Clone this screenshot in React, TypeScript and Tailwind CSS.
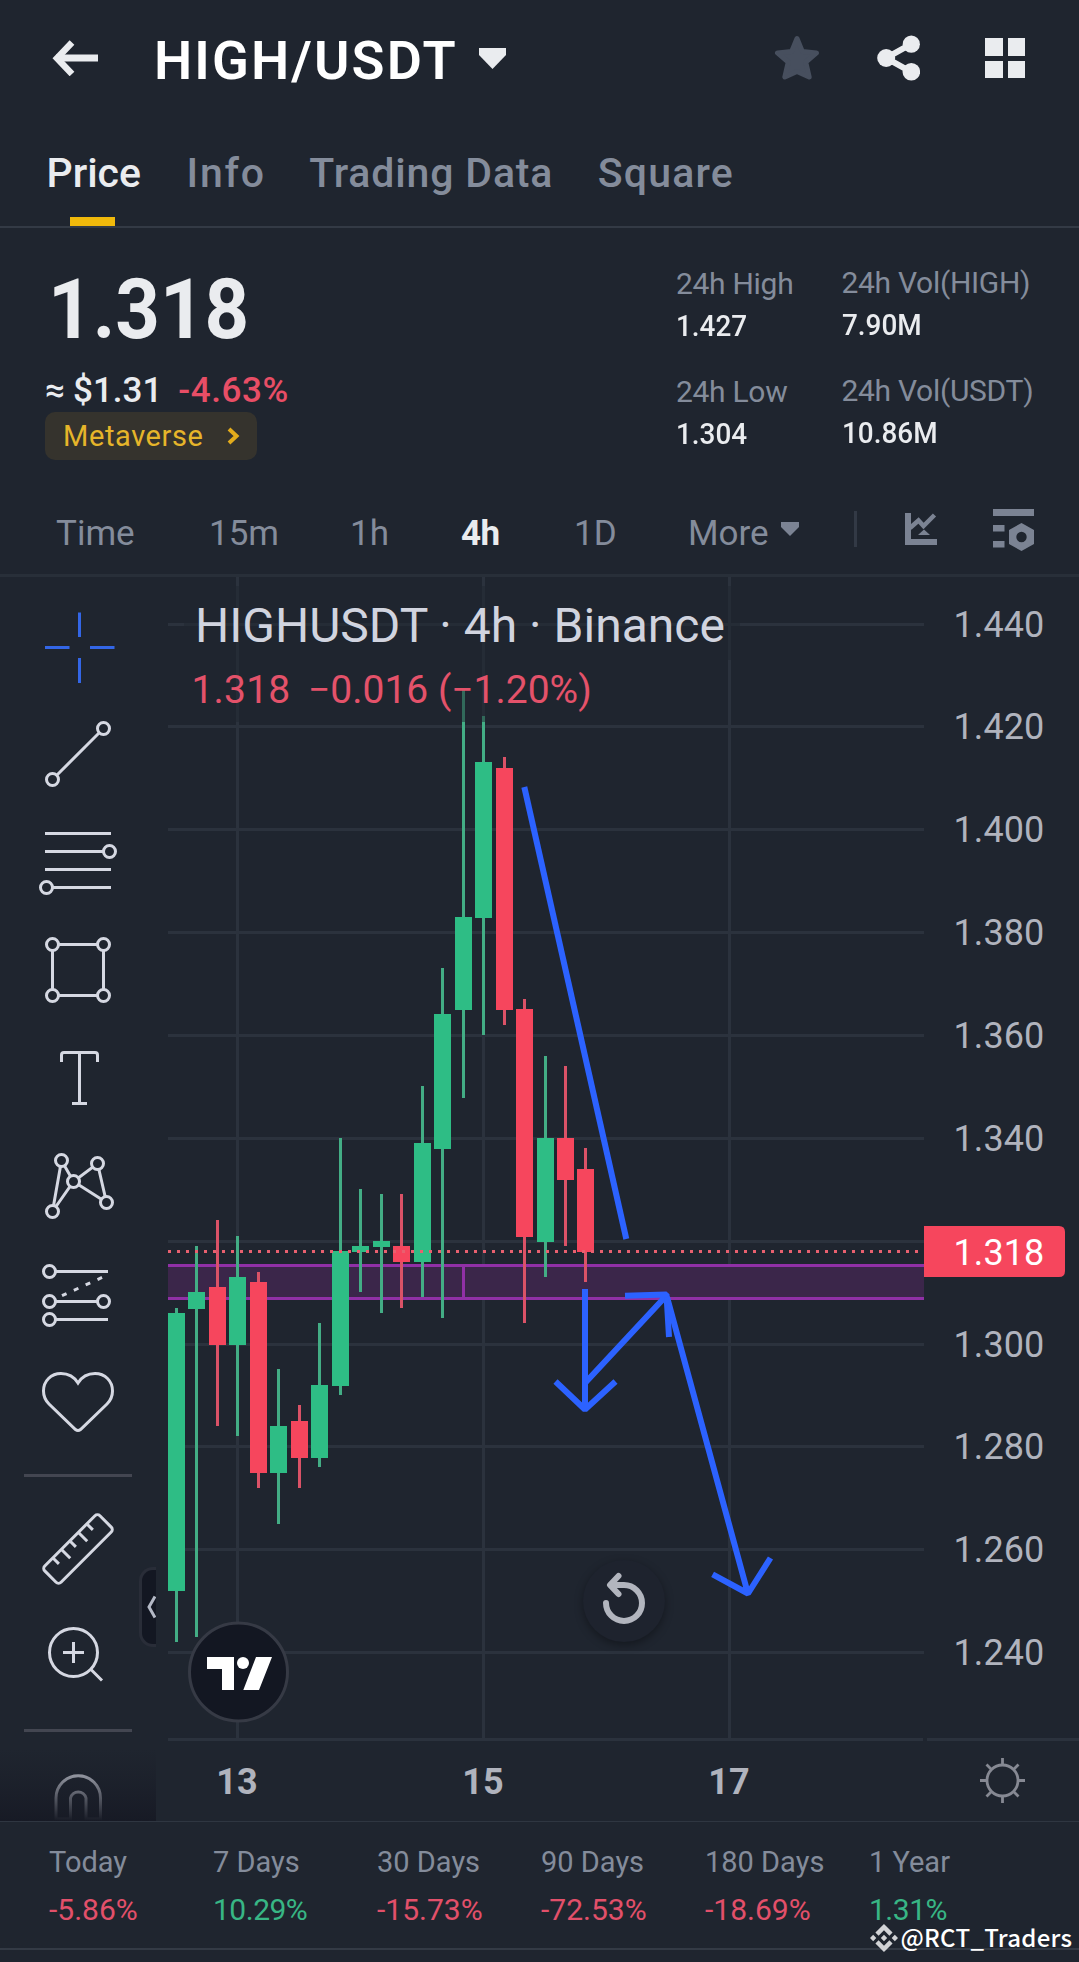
import { SiBinance } from 'react-icons/si'

const GREEN = '#2ebd85'
const RED = '#f6465d'

// [x, high, bodyTop, bodyBottom, low, up]
const candles: [number, number, number, number, number, boolean][] = [
  [176.5, 1308, 1313, 1591, 1642, true],
  [196.5, 1246, 1292, 1309, 1637, true],
  [217.5, 1220, 1287, 1345, 1426, false],
  [237.5, 1236, 1277, 1345, 1436, true],
  [258.5, 1272, 1282, 1473, 1488, false],
  [278.5, 1369, 1426, 1473, 1524, true],
  [299.5, 1405, 1421, 1458, 1488, false],
  [319.5, 1323, 1385, 1458, 1467, true],
  [340.5, 1138, 1251, 1386, 1395, true],
  [360.5, 1189, 1246, 1252, 1292, true],
  [381.5, 1194, 1241, 1247, 1313, true],
  [401.5, 1194, 1246, 1262, 1308, false],
  [422.5, 1086, 1143, 1262, 1297, true],
  [442.5, 968, 1014, 1149, 1318, true],
  [463.5, 690, 917, 1010, 1098, true],
  [483.5, 716, 762, 918, 1035, true],
  [504.5, 757, 768, 1010, 1025, false],
  [524.5, 999, 1009, 1237, 1323, false],
  [545.5, 1056, 1138, 1242, 1277, true],
  [565.5, 1066, 1138, 1180, 1246, false],
  [585.5, 1148, 1169, 1252, 1282, false],
]

const levels = [
  { y: 624.5, label: '1.440' },
  { y: 726.5, label: '1.420' },
  { y: 829.5, label: '1.400' },
  { y: 932.5, label: '1.380' },
  { y: 1035.5, label: '1.360' },
  { y: 1138.5, label: '1.340' },
  { y: 1241.5, label: '' },
  { y: 1344.5, label: '1.300' },
  { y: 1446.5, label: '1.280' },
  { y: 1549.5, label: '1.260' },
  { y: 1652.5, label: '1.240' },
]

const days = [
  { x: 237.5, label: '13' },
  { x: 483.5, label: '15' },
  { x: 729.5, label: '17' },
]

const periods = [
  { label: 'Today', value: '-5.86%', up: false },
  { label: '7 Days', value: '10.29%', up: true },
  { label: '30 Days', value: '-15.73%', up: false },
  { label: '90 Days', value: '-72.53%', up: false },
  { label: '180 Days', value: '-18.69%', up: false },
  { label: '1 Year', value: '1.31%', up: true },
]

function Header() {
  return (
    <header className="flex h-[116px] items-center">
      <svg className="ml-[52px] h-[36px] w-[46px]" viewBox="52 40 46 36" fill="none" stroke="#eaecef">
        <path d="M56 58H98" strokeWidth="7" />
        <path d="M72 42.5L57 58.2L72 74" strokeWidth="6.5" />
      </svg>
      <h1 className="mt-[6px] ml-[56px] text-[54px] leading-[60px] font-semibold tracking-[2.13px] text-white">HIGH/USDT</h1>
      <svg className="ml-[21px] h-[21px] w-[27px]" viewBox="0 0 27 21" fill="#eaecef">
        <path d="M0 0H27V7L13.5 21L0 7Z" />
      </svg>
      <svg className="ml-auto h-[46px] w-[46px]" viewBox="0 0 46 46" fill="#474f5e" stroke="#474f5e" strokeWidth="5" strokeLinejoin="round">
        <path d="M23 3.5L28.4 16.6L42.5 17.9L31.8 27.2L35.2 42L23 36.4L10.8 42L14.2 27.2L3.5 17.9L17.6 16.6Z" />
      </svg>
      <svg className="ml-[57px] h-[46px] w-[43px]" viewBox="877 35 43 46" fill="#eaecef" stroke="#eaecef">
        <path d="M911 44.2L886 58L911 71.8" fill="none" strokeWidth="6" />
        <circle cx="911.3" cy="44.2" r="8.6" stroke="none" />
        <circle cx="886.2" cy="58" r="9" stroke="none" />
        <circle cx="911.3" cy="71.8" r="8.8" stroke="none" />
      </svg>
      <div className="mr-[54px] ml-[65px] grid grid-cols-2 gap-[5px]">
        <i className="h-[17.5px] w-[17.5px] bg-[#eaecef]" />
        <i className="h-[17.5px] w-[17.5px] bg-[#eaecef]" />
        <i className="h-[17.5px] w-[17.5px] bg-[#eaecef]" />
        <i className="h-[17.5px] w-[17.5px] bg-[#eaecef]" />
      </div>
    </header>
  )
}

function Tabs() {
  return (
    <nav className="flex h-[112px] gap-[44.5px] border-b-2 border-[#333a45] pt-[33px] pl-[46.5px] text-[41px] leading-[48px] font-medium text-[#848c9b]">
      <div className="flex flex-col items-center text-[#eaecef]">
        Price
        <i className="mt-[20px] mr-[2px] h-[9px] w-[45px] bg-[#f0b90b]" />
      </div>
      <div className="ml-[1px] tracking-[1.8px]">Info</div>
      <div className="ml-[-1px] tracking-[0.84px]">Trading Data</div>
      <div className="tracking-[1.19px]">Square</div>
    </nav>
  )
}

function Stat({ label, value }: { label: string; value: string }) {
  return (
    <div className="mb-[24px]">
      <div className="tracking-[-0.3px] text-[#848c9b]">{label}</div>
      <div className="origin-left scale-x-[0.93] font-medium text-[#eaecef]">{value}</div>
    </div>
  )
}

function Summary() {
  return (
    <section className="flex h-[262px]">
      <div className="w-[631px] pt-[40px] pl-[45px]">
        <div className="ml-[3px] origin-left scale-x-[0.927] text-[84px] leading-[84px] font-bold text-[#eaecef]">1.318</div>
        <div className="mt-[19px] flex text-[35px] leading-[40px] font-medium text-[#eaecef]">
          <span>≈</span>
          <span className="ml-[8px]">$1.31</span>
          <span className="ml-[16px] tracking-[0.6px] text-[#e84e66]">-4.63%</span>
        </div>
        <div className="mt-[1px] flex h-[48px] w-[212px] items-center rounded-[10px] bg-[#35332d] pl-[18px] text-[29px] tracking-[0.6px] text-[#e6b52a]">
          <span className="pt-[2px]">Metaverse</span>
          <svg className="ml-[23px] h-[18px] w-[13px]" viewBox="0 0 13 18" fill="none" stroke="#e3ac1c" strokeWidth="4">
            <path d="M2 2L9.5 9L2 16" />
          </svg>
        </div>
      </div>
      <div className="ml-[45px] flex text-[30px] leading-[42px] whitespace-nowrap">
        <div className="w-[165.5px] pt-[35px]">
          <Stat label="24h High" value="1.427" />
          <Stat label="24h Low" value="1.304" />
        </div>
        <div className="pt-[34px]">
          <Stat label="24h Vol(HIGH)" value="7.90M" />
          <Stat label="24h Vol(USDT)" value="10.86M" />
        </div>
      </div>
    </section>
  )
}

function Intervals() {
  return (
    <div className="flex h-[84px] items-center pl-[56px] text-[35px] leading-[40px] text-[#848c9b]">
      <span className="w-[153px] pt-[3px]">Time</span>
      <span className="w-[141px] pt-[3px]">15m</span>
      <span className="w-[111px] pt-[3px]">1h</span>
      <span className="w-[113px] pt-[3px] font-bold tracking-[-0.5px] text-[#eaecef]">4h</span>
      <span className="w-[114px] pt-[3px]">1D</span>
      <span className="w-[93px] pt-[3px]">More</span>
      <svg className="mt-[-6px] h-[14px] w-[18px]" viewBox="0 0 18 14" fill="#7b8393">
        <path d="M0 0H18V5L9 14L0 5Z" />
      </svg>
      <i className="mt-[-6px] ml-[55px] h-[36px] w-[3px] bg-[#323945]" />
      <svg className="mt-[-6px] ml-[48px] h-[32px] w-[32px]" viewBox="0 0 32 32" fill="#7b8393">
        <path d="M0 0H6V26H32V32H0Z" />
        <path d="M5 15L13.5 7.5L18.5 13L29.5 2" fill="none" stroke="#7b8393" strokeWidth="4.5" />
        <path d="M13 22L19 16.5L25 22Z" />
      </svg>
      <svg className="mt-[-4px] ml-[56px] h-[42px] w-[42px]" viewBox="0 0 42 42" fill="#7b8393">
        <path d="M0 0H41V7H0ZM0 16H11.5V22.5H0ZM0 32H11.5V38.5H0Z" />
        <path fillRule="evenodd" d="M28.5 14L41 21V35L28.5 42L16 35V21ZM28.5 22.8A5.2 5.2 0 1 0 28.5 33.2A5.2 5.2 0 1 0 28.5 22.8Z" />
      </svg>
    </div>
  )
}

function Tool({ top, children }: { top: number; children: React.ReactNode }) {
  return (
    <svg className="block h-[108px] w-[156px]" viewBox={`0 ${top} 156 108`} fill="none" stroke="#d5d8e2" strokeWidth="3">
      {children}
    </svg>
  )
}

function Dot({ x, y }: { x: number; y: number }) {
  return <circle cx={x} cy={y} r="6" fill="#1f252f" />
}

function Toolbar() {
  return (
    <aside className="relative w-[156px] shrink-0 pt-[16px]">
      <Tool top={593}>
        <path stroke="#3366e6" d="M79.5 612.5V637M79.5 658V683M45 647.5H69.5M90 647.5H114.5" />
      </Tool>
      <Tool top={701}>
        <path d="M52.5 779.5L103.5 728.5" />
        <Dot x={103.5} y={728.5} />
        <Dot x={52.5} y={779.5} />
      </Tool>
      <Tool top={809}>
        <path d="M45 833.5H111M45 851.5H109M45 869.5H111M46 887.5H111" />
        <Dot x={109.5} y={851.5} />
        <Dot x={46.5} y={887.5} />
      </Tool>
      <Tool top={917}>
        <path d="M52.5 944.5H103.5V995.5H52.5Z" />
        <Dot x={52.5} y={944.5} />
        <Dot x={103.5} y={944.5} />
        <Dot x={52.5} y={995.5} />
        <Dot x={103.5} y={995.5} />
      </Tool>
      <Tool top={1025}>
        <path d="M61.5 1062V1055Q61.5 1052.5 64 1052.5H95Q97.5 1052.5 97.5 1055V1062M79.5 1052.5V1103.5M72 1103.5H87" />
      </Tool>
      <Tool top={1133}>
        <path d="M73.5 1181.5L61.5 1160.5L52.5 1211.5L73.5 1181.5L97.5 1163.5L106.5 1202.5Z" />
        <Dot x={61.5} y={1160.5} />
        <Dot x={97.5} y={1163.5} />
        <Dot x={73.5} y={1181.5} />
        <Dot x={106.5} y={1202.5} />
        <Dot x={52.5} y={1211.5} />
      </Tool>
      <Tool top={1241}>
        <path d="M49.5 1271.5H108M49.5 1301.5H103.5M49.5 1319.5H108" />
        <path d="M62 1295.7L104 1276.6" strokeDasharray="5 8" />
        <Dot x={49.5} y={1271.5} />
        <Dot x={49.5} y={1301.5} />
        <Dot x={103.5} y={1301.5} />
        <Dot x={49.5} y={1319.5} />
      </Tool>
      <Tool top={1349}>
        <path d="M78 1383C74 1376.5 67 1373.5 61 1373.5C51 1373.5 43.5 1381 43.5 1391C43.5 1397 46 1401 49 1404L75.5 1429.5Q78 1431.5 80.5 1429.5L107 1404C110 1401 112.5 1397 112.5 1391C112.5 1381 105 1373.5 95 1373.5C89 1373.5 82 1376.5 78 1383Z" />
      </Tool>
      <div className="flex h-[38px] items-center pb-[2px] pl-[24px]">
        <i className="h-[3px] w-[108px] bg-[#434651]" />
      </div>
      <Tool top={1495}>
        <g transform="translate(78 1549) rotate(-45)">
          <rect x="-39" y="-11.5" width="78" height="23" rx="3.5" />
          <path d="M-24 -11V-3M-12 -11V1M0 -11V-3M12 -11V1M24 -11V-3" />
        </g>
      </Tool>
      <Tool top={1603}>
        <circle cx="73.5" cy="1652.5" r="24" />
        <path d="M63 1652.5H84M73.5 1642V1663M91 1669.5L102 1680.5" />
      </Tool>
      <div className="flex h-[38px] items-center pl-[24px]">
        <i className="h-[3px] w-[108px] bg-[#434651]" />
      </div>
      <svg className="block h-[72px] w-[156px]" viewBox="0 1749 156 72" fill="none" stroke="#d5d8e2" strokeWidth="3">
        <defs>
          <linearGradient id="fade" x1="0" y1="0" x2="0" y2="1">
            <stop offset="0" stopColor="#1a1d28" stopOpacity="0" />
            <stop offset="1" stopColor="#171a25" />
          </linearGradient>
        </defs>
        <path d="M56 1819V1798A22.25 22.25 0 0 1 100.5 1798V1819H86V1798A8 8 0 0 0 70.5 1798V1819Z" />
        <rect x="0" y="1749" width="156" height="72" fill="url(#fade)" stroke="none" />
      </svg>
      {/* collapse handle */}
      <div className="absolute top-[990px] right-0 flex h-[80px] w-[17px] items-center justify-end rounded-l-[14px] border-[3px] border-r-0 border-[#292d38] bg-[#131722]">
        <svg className="h-[24px] w-[9px]" viewBox="0 0 9 24" fill="none" stroke="#b4b9c6" strokeWidth="3">
          <path d="M8 1.5L2 12L8 22.5" />
        </svg>
      </div>
    </aside>
  )
}

function Chart() {
  return (
    <svg className="block h-[1244px] w-[923px]" viewBox="156 577 923 1244">
      <g stroke="#2b323d" strokeWidth="3">
        {levels.map((l) => (
          <path key={l.y} d={`M168 ${l.y}H924`} />
        ))}
        {days.map((d) => (
          <path key={d.x} d={`M${d.x} 577V1739`} />
        ))}
        <path d="M168 1739.5H923M927 1739.5H1079" />
      </g>

      <rect x="168" y="1265.5" width="756" height="33" fill="#3b264a" />
      <path d="M168 1265.5H924M168 1298.5H924M463.5 1265V1299" stroke="#9030a6" strokeWidth="3" fill="none" />

      {candles.map(([x, high, top, bottom, low, up]) => (
        <g key={x}>
          <rect x={x - 1.5} y={high} width="3" height={low - high} fill={up ? '#43ad85' : '#da5267'} />
          <rect x={x - 8.5} y={top} width="17" height={bottom - top} fill={up ? GREEN : RED} />
        </g>
      ))}
      <path d="M168 1251.5H924" stroke="#e8606f" strokeWidth="3" strokeDasharray="3 6" />

      <g stroke="#2c62ff" strokeWidth="6" fill="none" strokeLinejoin="bevel">
        <path d="M524.3 787L626.3 1239" />
        <path d="M585 1289V1409M555.5 1381.5L585 1409.5L615.5 1381.5" />
        <path d="M585 1383L666 1296M625 1295.7L666.5 1294.5L669 1337" />
        <path d="M667 1297L747.5 1592M712.6 1574.3L748 1593.5L770.5 1558" />
      </g>

      {/* legend */}
      <rect x="184" y="586" width="556" height="74" fill="#1f252f" fillOpacity="0.5" />
      <rect x="184" y="660" width="420" height="62" fill="#1f252f" fillOpacity="0.5" />
      <text x="195" y="642" fontSize="48" fill="#d1d4df">HIGHUSDT · 4h · Binance</text>
      <g fontSize="39" fill="#e4526a">
        <text x="191.5" y="703" letterSpacing="0.2">1.318</text>
        <text x="308" y="703">−0.016 (−1.20%)</text>
      </g>

      <g fontSize="36" fill="#b0b3bd">
        {levels.map((l) => (
          <text key={l.y} x="953.5" y={l.y + 12.4} letterSpacing="0.1">{l.label}</text>
        ))}
        {days.map((d) => (
          <text key={d.x} x={d.x - 0.5} y="1794" fontWeight="700" textAnchor="middle">{d.label}</text>
        ))}
      </g>
      <path d="M924 1226H1059Q1065 1226 1065 1232V1271Q1065 1277 1059 1277H924Z" fill={RED} />
      <text x="953.5" y="1264.5" fontSize="36" letterSpacing="0.1" fill="#fff">1.318</text>

      {/* tradingview badge */}
      <circle cx="238.5" cy="1672" r="49" fill="#131722" stroke="#363a45" strokeWidth="3" />
      <path d="M207 1657H234V1690H222V1669H207ZM256 1657H272L259 1690H243.3Z" fill="#fff" />
      <circle cx="243" cy="1663" r="6" fill="#fff" />

      {/* reset view */}
      <circle className="drop-shadow-[0_3px_4px_rgba(0,0,0,0.35)]" cx="624" cy="1601" r="41" fill="#1e232e" />
      <g fill="none" stroke="#b2b5be" strokeWidth="6" strokeLinecap="round" strokeLinejoin="round">
        <path d="M606 1603A18 18 0 1 0 624 1585H611" />
        <path d="M618.5 1576L610 1585L618.5 1594" />
      </g>

      {/* axis settings */}
      <g transform="translate(1002.5 1780.5)" fill="none" stroke="#868993" strokeWidth="2.8">
        <circle r="15.5" />
        <path d="M0 -16V-22.5M0 16V22.5M-16 0H-22.5M16 0H22.5M-11 -11L-16 -16M11 -11L16 -16M-11 11L-16 16M11 11L16 16" />
      </g>
    </svg>
  )
}

function Footer() {
  return (
    <footer className="relative h-[129px] border-t border-[#2f3641]">
      <div className="grid h-[128px] grid-cols-[repeat(6,164px)] border-b-2 border-[#333a45] pt-[16px] pl-[49px] leading-[48px] whitespace-nowrap">
        {periods.map((p) => (
          <div key={p.label}>
            <div className="text-[29px] text-[#848c9b]">{p.label}</div>
            <div className={p.up ? 'text-[30px] tracking-[-0.5px] text-[#38b685]' : 'text-[30px] text-[#e2506a]'}>{p.value}</div>
          </div>
        ))}
      </div>
      <div className="absolute top-[99px] left-[870px] flex h-[32px] items-center font-['Noto_Sans_CJK_SC'] text-[24px] leading-[30px] font-medium tracking-[0.27px] text-white">
        <SiBinance className="mt-[1px] mr-[2.5px] h-[28px] w-[28px] text-[#d2d3d6]" />
        @RCT_Traders
      </div>
    </footer>
  )
}

export default function App() {
  return (
    <div className="h-[1962px] w-[1079px] overflow-hidden bg-[#1f252f] font-[Roboto,sans-serif]">
      <Header />
      <Tabs />
      <Summary />
      <Intervals />
      <div className="flex h-[1247px] border-t-[3px] border-[#282f39]">
        <Toolbar />
        <Chart />
      </div>
      <Footer />
    </div>
  )
}
